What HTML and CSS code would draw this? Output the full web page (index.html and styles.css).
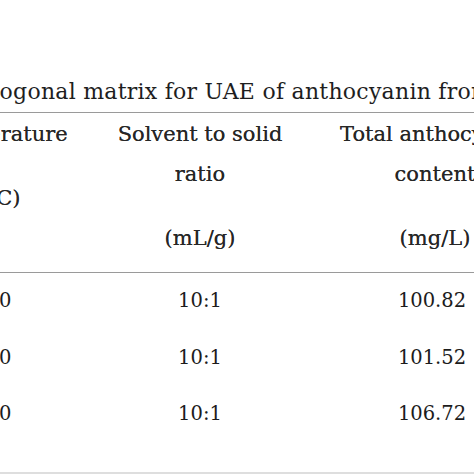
FILE: index.html
```html
<!DOCTYPE html>
<html lang="en">
<head>
<meta charset="utf-8">
<title>Table</title>
<link rel="stylesheet" href="styles.css">
</head>
<body>
<div class="page">
  <div class="sheet">
    <p class="caption">Orthogonal matrix for UAE of anthocyanin from purple sweet potato</p>
    <div class="table">
      <div class="row head">
        <div class="cell"><p>Temperature</p><p>(°C)</p></div>
        <div class="cell"><p>Solvent to solid</p><p>ratio</p><p class="unit">(mL/g)</p></div>
        <div class="cell"><p>Total anthocyanin</p><p>content</p><p class="unit">(mg/L)</p></div>
      </div>
      <div class="body">
        <div class="row"><div class="cell">40</div><div class="cell">10:1</div><div class="cell num">100.82</div></div>
        <div class="row"><div class="cell">50</div><div class="cell">10:1</div><div class="cell num">101.52</div></div>
        <div class="row"><div class="cell">60</div><div class="cell">10:1</div><div class="cell num">106.72</div></div>
      </div>
      <div class="foot"></div>
    </div>
  </div>
</div>
</body>
</html>
```
FILE: styles.css
```css
html, body {
  margin: 0;
  padding: 0;
  background: #ffffff;
}
.page {
  width: 474px;
  height: 474px;
  overflow: hidden;
}
.sheet {
  margin-left: -101px;
  width: 900px;
  padding-top: 80px;
  font-family: "DejaVu Serif", serif;
  color: #1c1c1c;
}
.caption {
  margin: 0 0 8px 48px;
  font-size: 22px;
  letter-spacing: 0.25px;
  line-height: 24px;
  white-space: nowrap;
  color: #1e1e1e;
}
.table {
  width: 900px;
}
.row {
  display: grid;
  grid-template-columns: 200px 202px 268px;
}
.head {
  border-top: 1px solid #9a9a9a;
  border-bottom: 1px solid #9a9a9a;
  padding: 1px 0 14px 0;
}
.head .cell p {
  margin: 0;
  font-size: 21px;
  line-height: 40px;
  text-align: center;
  color: #262626;
  white-space: nowrap;
  text-shadow: 0 0 0.5px #555;
}
.head .cell p + p.unit,
.head .cell:first-child p + p {
  margin-top: 24px;
}
.body .cell {
  font-size: 19.5px;
  line-height: 56.5px;
  text-align: center;
}
.body .cell.num {
  padding-right: 6px;
}
.foot {
  margin-top: 29px;
  height: 2px;
  background: #dedede;
}
```
